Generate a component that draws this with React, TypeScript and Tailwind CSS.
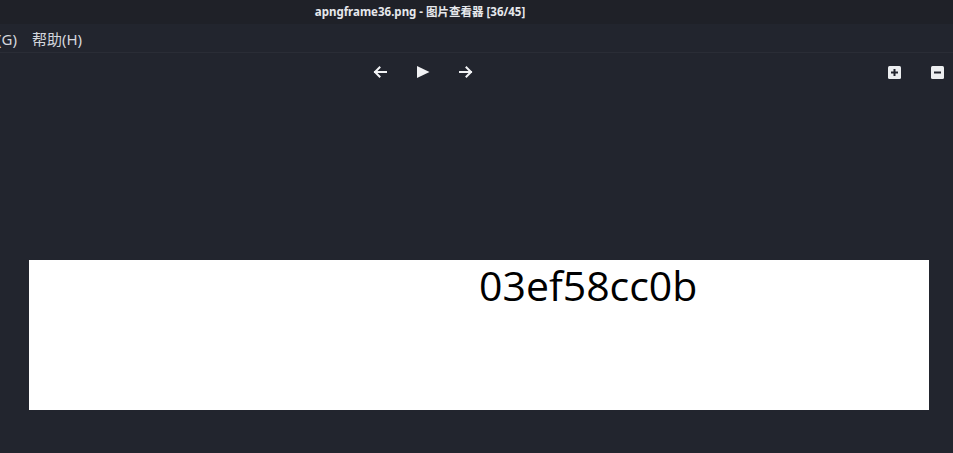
import React from "react";

export default function App() {
  return (
    <div className="w-[953px] h-[453px] overflow-hidden bg-[#22252e] flex flex-col" style={{ fontFamily: '"Noto Sans", "Noto Sans CJK SC", sans-serif' }}>
      <div className="h-[24px] bg-[#1f2128] flex items-center shrink-0">
        <div className="w-[840px] text-center text-[11.5px] font-bold text-[#e6e8ec] leading-none">
          apngframe36.png - 图片查看器 [36/45]
        </div>
      </div>
      <div className="h-[29px] pt-[3px] bg-[#22252e] border-b border-[#2a2d36] flex items-center shrink-0 text-[15px] text-[#d4d7dd]">
        <span className="ml-[-3px]">(G)</span>
        <span className="ml-[15px]">帮助(H)</span>
      </div>
      <div className="h-[38px] flex items-center shrink-0">
        <div className="w-[953px] flex items-center">
          <div className="ml-[372px] flex items-center gap-[27px]">
            <svg width="16" height="16" viewBox="0 0 16 16" fill="none" stroke="#f2f3f5" strokeWidth="2" strokeLinecap="square">
              <path d="M14 8H3" />
              <path d="M7.5 3.5L3 8l4.5 4.5" />
            </svg>
            <svg width="16" height="16" viewBox="0 0 16 16">
              <path d="M2 2L14.5 8 2 14z" fill="#f2f3f5" />
            </svg>
            <svg width="16" height="16" viewBox="0 0 16 16" fill="none" stroke="#f2f3f5" strokeWidth="2" strokeLinecap="square">
              <path d="M2 8h11" />
              <path d="M8.5 3.5L13 8l-4.5 4.5" />
            </svg>
          </div>
          <div className="ml-auto mr-[9px] flex items-center gap-[30px]">
            <svg width="13" height="13" viewBox="0 0 13 13">
              <rect x="0" y="0" width="13" height="13" rx="1.5" fill="#eceef0" />
              <path d="M6.5 3v7M3 6.5h7" stroke="#22252e" strokeWidth="2" />
            </svg>
            <svg width="13" height="13" viewBox="0 0 13 13">
              <rect x="0" y="0" width="13" height="13" rx="1.5" fill="#eceef0" />
              <path d="M3 6.5h7" stroke="#22252e" strokeWidth="2" />
            </svg>
          </div>
        </div>
      </div>
      <div className="flex-1 flex items-start">
        <div className="mt-[169px] ml-[29px] w-[900px] h-[150px] bg-white flex">
          <div className="ml-[450px] text-[41px] leading-[50px] text-black" style={{ fontFamily: '"Open Sans", sans-serif' }}>
            03ef58cc0b
          </div>
        </div>
      </div>
    </div>
  );
}
